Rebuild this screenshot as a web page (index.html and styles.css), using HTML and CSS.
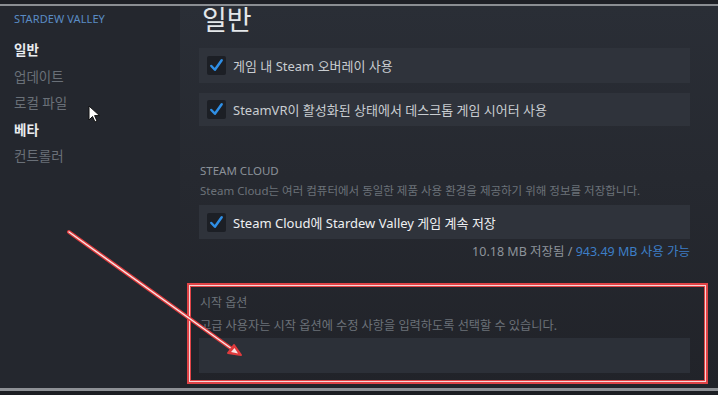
FILE: index.html
```html
<!DOCTYPE html>
<html lang="ko">
<head>
<meta charset="utf-8">
<link rel="stylesheet" href="styles.css">
</head>
<body>
<div class="frame">
  <div class="topbar"></div>
  <div class="app">
    <nav class="sidebar">
      <div class="game-title">STARDEW VALLEY</div>
      <ul class="nav">
        <li class="nav-item active">일반</li>
        <li class="nav-item">업데이트</li>
        <li class="nav-item">로컬 파일</li>
        <li class="nav-item active">베타</li>
        <li class="nav-item">컨트롤러</li>
      </ul>
    </nav>
    <main class="content">
      <h1 class="page-title">일반</h1>
      <div class="row">
        <span class="check"><svg viewBox="0 0 18 18"><path d="M3.5 9.5 L7.3 13.5 L14.5 3.5" fill="none" stroke="#2f8fe6" stroke-width="2.6" stroke-linecap="round" stroke-linejoin="round"/></svg></span>
        <span class="row-label">게임 내 Steam 오버레이 사용</span>
      </div>
      <div class="row">
        <span class="check"><svg viewBox="0 0 18 18"><path d="M3.5 9.5 L7.3 13.5 L14.5 3.5" fill="none" stroke="#2f8fe6" stroke-width="2.6" stroke-linecap="round" stroke-linejoin="round"/></svg></span>
        <span class="row-label">SteamVR이 활성화된 상태에서 데스크톱 게임 시어터 사용</span>
      </div>

      <h2 class="section-title">STEAM CLOUD</h2>
      <p class="section-desc">Steam Cloud는 여러 컴퓨터에서 동일한 제품 사용 환경을 제공하기 위해 정보를 저장합니다.</p>
      <div class="row">
        <span class="check"><svg viewBox="0 0 18 18"><path d="M3.5 9.5 L7.3 13.5 L14.5 3.5" fill="none" stroke="#2f8fe6" stroke-width="2.6" stroke-linecap="round" stroke-linejoin="round"/></svg></span>
        <span class="row-label strong">Steam Cloud에 Stardew Valley 게임 계속 저장</span>
      </div>
      <div class="storage"><span class="used">10.18 MB 저장됨 / </span><span class="avail">943.49 MB 사용 가능</span></div>

      <h2 class="launch-title">시작 옵션</h2>
      <p class="launch-desc">고급 사용자는 시작 옵션에 수정 사항을 입력하도록 선택할 수 있습니다.</p>
      <div class="input-box"></div>
    </main>
  </div>
  <div class="bottombar"></div>

  <div class="highlight"></div>
  <svg class="arrow" width="718" height="395" viewBox="0 0 718 395">
    <line x1="69" y1="232" x2="232" y2="349" stroke="#e03b3d" stroke-width="4" stroke-linecap="round"/>
    <line x1="69" y1="232" x2="232" y2="349" stroke="#f6e6e6" stroke-width="1.4" stroke-linecap="round"/>
    <path d="M241 355 L228 353 L234 345 Z" fill="#e03b3d" stroke="#e03b3d" stroke-width="2" stroke-linejoin="round"/>
    <path d="M238 353.5 L231 352 L234.5 348 Z" fill="#f6e6e6"/>
  </svg>
  <svg class="cursor" width="13" height="19" viewBox="0 0 13 19">
    <path d="M1 1 L1 15 L4.5 11.5 L7 17 L9 16 L6.6 10.6 L11.5 10.6 Z" fill="#ffffff" stroke="#111" stroke-width="1"/>
  </svg>
</div>
</body>
</html>
```
FILE: styles.css
```css
* { box-sizing: border-box; }
html, body { margin: 0; padding: 0; }
body {
  width: 718px;
  height: 395px;
  overflow: hidden;
  background: #1c1e23;
  font-family: "Noto Sans", "Noto Sans CJK KR", sans-serif;
}
.frame {
  position: relative;
  width: 718px;
  height: 395px;
  display: flex;
  flex-direction: column;
}
.topbar {
  height: 6px;
  background: #1e2026;
  border-bottom: 2px solid #8b8e93;
  flex: none;
}
.app {
  flex: 1;
  display: flex;
  min-height: 0;
}
.sidebar {
  width: 180px;
  flex: none;
  background: #24272e;
  padding: 6px 0 0 14px;
}
.game-title {
  font-size: 11px;
  color: #5a8cc4;
  letter-spacing: 0.1px;
  line-height: 14px;
}
.nav {
  list-style: none;
  margin: 11px 0 0;
  padding: 0;
}
.nav-item {
  font-size: 13.5px;
  line-height: 26.5px;
  color: #6a7078;
}
.nav-item.active {
  color: #e9ecef;
  font-weight: 700;
}
.content {
  flex: 1;
  background: linear-gradient(180deg, #2a2e36 0%, #262930 45%, #212329 100%);
  padding: 0 28px 0 19px;
}
.page-title {
  margin: 0 0 0 3px;
  font-size: 27px;
  font-weight: 400;
  line-height: 28px;
  color: #e4e7ea;
}
.row {
  height: 35px;
  margin-top: 14px;
  background: #2f333b;
  display: flex;
  align-items: center;
  padding-left: 8px;
}
.row + .row { margin-top: 10px; height: 33px; }
.check {
  width: 19px;
  height: 19px;
  background: #1c1f25;
  border-radius: 2px;
  display: flex;
  align-items: center;
  justify-content: center;
  flex: none;
}
.check svg { width: 17px; height: 17px; }
.row-label {
  margin-left: 7px;
  font-size: 13px;
  color: #c9cdd1;
}
.row-label.strong {
  color: #eef0f2;
  font-size: 13px;
  font-weight: 400;
}
.section-title {
  margin: 38px 0 0 1px;
  font-size: 11.5px;
  font-weight: 400;
  color: #8b9199;
  line-height: 14px;
}
.section-desc {
  margin: 6px 0 0 1px;
  font-size: 11.5px;
  color: #6c7279;
  line-height: 14px;
  white-space: nowrap;
}
.section-desc + .row { margin-top: 7px; height: 34px; }
.storage {
  text-align: right;
  font-size: 12.5px;
  line-height: 16px;
  margin-top: 5px;
}
.storage .used { color: #8e949b; }
.storage .avail { color: #3d7ec6; }
.launch-title {
  margin: 36px 0 0 1px;
  font-size: 12px;
  font-weight: 400;
  color: #6c7279;
  line-height: 14px;
}
.launch-desc {
  margin: 9px 0 0 1px;
  font-size: 12.2px;
  color: #6c7279;
  line-height: 14px;
  white-space: nowrap;
}
.input-box {
  margin-top: 5px;
  height: 35px;
  background: #2c3038;
}
.bottombar {
  height: 7px;
  flex: none;
  background: #1c1e23;
  border-top: 3px solid #8d9095;
}
.highlight {
  position: absolute;
  left: 187px;
  top: 283px;
  width: 521px;
  height: 101px;
  border: 2px solid #e04346;
  box-shadow: inset 0 0 0 1px #f4d8d8, inset 0 0 0 2px #e04346;
  pointer-events: none;
}
.arrow {
  position: absolute;
  left: 0;
  top: 0;
  pointer-events: none;
}
.cursor {
  position: absolute;
  left: 88px;
  top: 105px;
}
```
